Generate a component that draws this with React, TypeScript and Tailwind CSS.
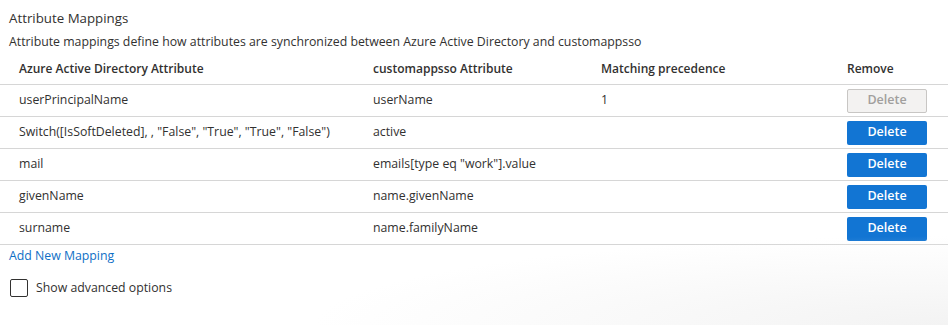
import React from "react";

const rows = [
  { source: "userPrincipalName", target: "userName", precedence: "1", locked: true },
  { source: 'Switch([IsSoftDeleted], , "False", "True", "True", "False")', target: "active", precedence: "", locked: false },
  { source: "mail", target: 'emails[type eq "work"].value', precedence: "", locked: false },
  { source: "givenName", target: "name.givenName", precedence: "", locked: false },
  { source: "surname", target: "name.familyName", precedence: "", locked: false },
];

const cols = "grid grid-cols-[354px_228px_246px_1fr] items-center pl-[19px]";

export default function App() {
  return (
    <div
      className="relative h-[325px] w-[948px] overflow-hidden bg-white text-[12.3px] text-[#323130]"
      style={{ fontFamily: '"Open Sans", "Noto Sans", sans-serif' }}
    >
      <div className="pt-[8px]">
        <h2 className="pl-[9px] text-[13.3px] leading-[20px]">Attribute Mappings</h2>
        <p className="mt-[4px] pl-[9px] leading-[20px]">
          Attribute mappings define how attributes are synchronized between Azure Active Directory and customappsso
        </p>

        <div className={`${cols} h-[33px] border-b border-[#d6d6d6] pt-[1px] text-[12px] font-semibold`}>
          <span>Azure Active Directory Attribute</span>
          <span>customappsso Attribute</span>
          <span>Matching precedence</span>
          <span>Remove</span>
        </div>

        {rows.map((row) => (
          <div key={row.source} className={`${cols} h-[32px] border-b border-[#d6d6d6]`}>
            <span>{row.source}</span>
            <span>{row.target}</span>
            <span>{row.precedence}</span>
            <div>
              {row.locked ? (
                <button
                  disabled
                  className="h-[24px] w-[80px] rounded-[2px] border border-[#c8c6c4] bg-[#f3f2f1] text-[12.5px] font-semibold text-[#a19f9d]"
                >
                  Delete
                </button>
              ) : (
                <button className="h-[24px] w-[80px] rounded-[2px] bg-[#1275d3] text-[12.5px] font-semibold text-white">
                  Delete
                </button>
              )}
            </div>
          </div>
        ))}

        <a className="block pl-[9px] leading-[21px] text-[#0f6fc6]" href="#">
          Add New Mapping
        </a>

        <label className="mt-[13px] flex items-center gap-[8px] pl-[10px]">
          <span className="h-[18px] w-[18px] rounded-[2px] border border-[#323130] bg-white" />
          <span className="leading-[18px]">Show advanced options</span>
        </label>
      </div>
      <div className="pointer-events-none absolute bottom-0 right-0 h-[90px] w-[640px] bg-[radial-gradient(ellipse_at_bottom_right,#f3f3f3,transparent_70%)]" />
    </div>
  );
}
